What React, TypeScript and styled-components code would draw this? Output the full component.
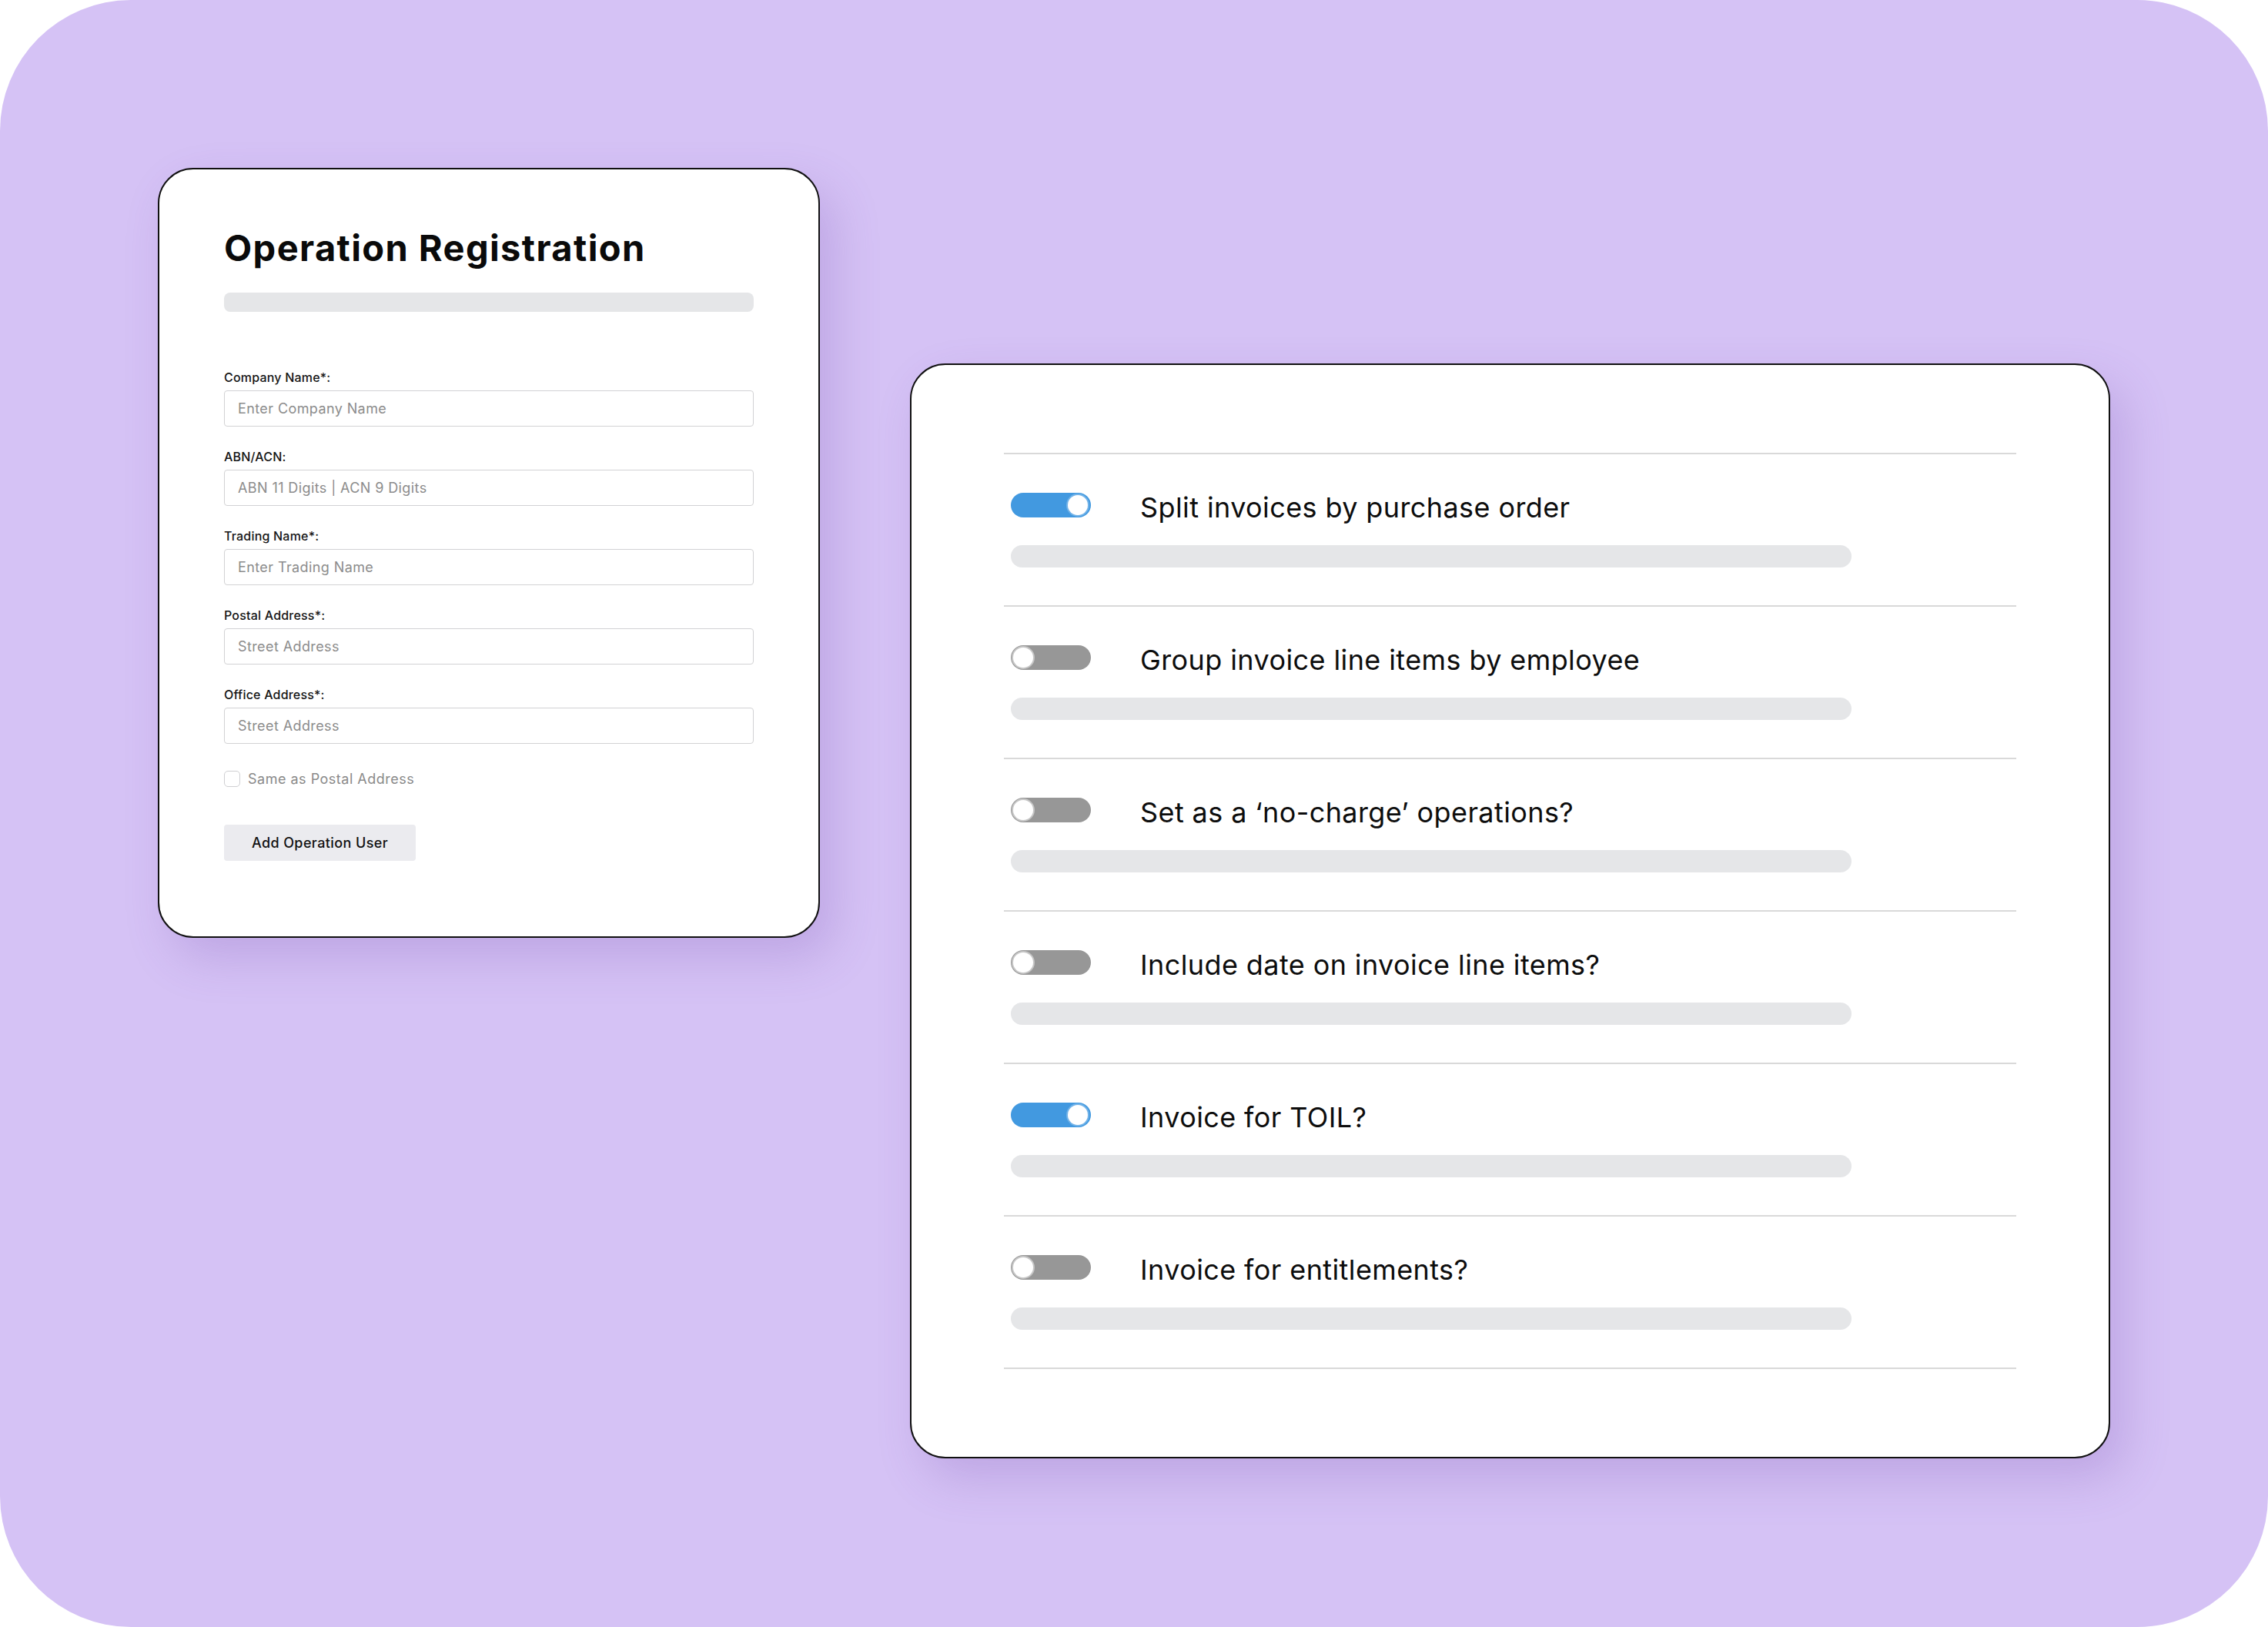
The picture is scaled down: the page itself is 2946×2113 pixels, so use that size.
import React from "react";
import styled, { createGlobalStyle } from "styled-components";

const Global = createGlobalStyle`
  html, body { margin: 0; padding: 0; background: #ffffff; }
  body { font-family: Inter, "Noto Sans", "Liberation Sans", sans-serif; -webkit-font-smoothing: antialiased; }
  * { box-sizing: border-box; }
`;

const Backdrop = styled.div`
  width: 2946px;
  height: 2113px;
  background: #d5c2f5;
  border-radius: 170px;
  display: flex;
  align-items: flex-start;
  gap: 117px;
  padding: 218px 0 0 205px;
  overflow: hidden;
`;

const Card = styled.div<{ $w: number; $h: number; $top?: number }>`
  width: ${(p) => p.$w}px;
  height: ${(p) => p.$h}px;
  margin-top: ${(p) => p.$top ?? 0}px;
  background: #ffffff;
  border: 2px solid #111111;
  border-radius: 46px;
  box-shadow: 18px 26px 60px rgba(110, 70, 170, 0.22);
  flex-shrink: 0;
`;

const FormCard = styled(Card)`
  padding: 74px 84px 0 84px;
  display: flex;
  flex-direction: column;
`;

const Title = styled.h1`
  margin: 0;
  font-family: Inter, "Liberation Sans", sans-serif;
  font-weight: 700;
  font-size: 47px;
  line-height: 55px;
  letter-spacing: 1.4px;
  color: #0a0a0a;
`;

const Placeholder = styled.div<{ $h: number; $r: number; $mt: number }>`
  height: ${(p) => p.$h}px;
  border-radius: ${(p) => p.$r}px;
  margin-top: ${(p) => p.$mt}px;
  background: #e5e6e8;
`;

const Fields = styled.div`
  margin-top: 75px;
  display: flex;
  flex-direction: column;
  gap: 29px;
`;

const Field = styled.div`
  display: flex;
  flex-direction: column;
  gap: 7px;
`;

const Label = styled.label`
  font-size: 16px;
  line-height: 20px;
  font-weight: 500;
  letter-spacing: 0.2px;
  color: #151515;
`;

const Input = styled.input`
  height: 47px;
  width: 100%;
  border: 1.5px solid #d2d2d4;
  border-radius: 4px;
  padding: 0 17px;
  font-family: Inter, "Liberation Sans", sans-serif;
  font-size: 18px;
  letter-spacing: 0.4px;
  color: #222;
  background: #fff;
  outline: none;
  &::placeholder { color: #8c8c8c; }
`;

const CheckRow = styled.label`
  margin-top: 35px;
  display: flex;
  align-items: center;
  gap: 10px;
  font-size: 18px;
  letter-spacing: 0.5px;
  color: #8a8a8a;
`;

const Box = styled.span`
  width: 21px;
  height: 21px;
  border: 1.5px solid #cfcfd2;
  border-radius: 5px;
  background: #fff;
`;

const Button = styled.button`
  margin-top: 49px;
  align-self: flex-start;
  width: 249px;
  height: 47px;
  border: none;
  border-radius: 4px;
  background: #ebebef;
  font-family: Inter, "Liberation Sans", sans-serif;
  font-size: 18px;
  font-weight: 500;
  letter-spacing: 0.4px;
  color: #111;
`;

const SettingsCard = styled(Card)`
  padding: 114px 120px 0 120px;
`;

const List = styled.div`
  border-bottom: 2px solid #d9d9d9;
`;

const Row = styled.div`
  height: 198px;
  border-top: 2px solid #d9d9d9;
  padding: 50px 214px 0 9px;
`;

const Head = styled.div`
  display: flex;
  align-items: center;
  gap: 64px;
  height: 32px;
`;

const Track = styled.span<{ $on: boolean }>`
  position: relative;
  width: 104px;
  height: 32px;
  border-radius: 16px;
  flex-shrink: 0;
  background: ${(p) => (p.$on ? "#4299e0" : "#979797")};
`;

const Knob = styled.span<{ $on: boolean }>`
  position: absolute;
  top: 3px;
  ${(p) => (p.$on ? "right: 4px;" : "left: 3px;")}
  width: 26px;
  height: 26px;
  border-radius: 50%;
  background: #fff;
  box-shadow: 0 0 0 2px ${(p) => (p.$on ? "rgba(255,255,255,0.25)" : "rgba(255,255,255,0.45)")};
`;

const RowLabel = styled.span`
  font-size: 36px;
  line-height: 44px;
  letter-spacing: 0.4px;
  color: #0d0d0d;
  margin-top: 6px;
`;

const fields = [
  { label: "Company Name*:", ph: "Enter Company Name" },
  { label: "ABN/ACN:", ph: "ABN 11 Digits | ACN 9 Digits" },
  { label: "Trading Name*:", ph: "Enter Trading Name" },
  { label: "Postal Address*:", ph: "Street Address" },
  { label: "Office Address*:", ph: "Street Address" },
];

const settings = [
  { text: "Split invoices by purchase order", on: true },
  { text: "Group invoice line items by employee", on: false },
  { text: "Set as a \u2018no-charge\u2019 operations?", on: false },
  { text: "Include date on invoice line items?", on: false },
  { text: "Invoice for TOIL?", on: true },
  { text: "Invoice for entitlements?", on: false },
];

export default function App() {
  return (
    <>
      <Global />
      <Backdrop>
        <FormCard $w={860} $h={1000}>
          <Title>Operation Registration</Title>
          <Placeholder $h={25} $r={8} $mt={31} />
          <Fields>
            {fields.map((f, i) => (
              <Field key={i}>
                <Label>{f.label}</Label>
                <Input placeholder={f.ph} readOnly />
              </Field>
            ))}
          </Fields>
          <CheckRow>
            <Box />
            Same as Postal Address
          </CheckRow>
          <Button>Add Operation User</Button>
        </FormCard>
        <SettingsCard $w={1559} $h={1422} $top={254}>
          <List>
            {settings.map((s, i) => (
              <Row key={i}>
                <Head>
                  <Track $on={s.on}>
                    <Knob $on={s.on} />
                  </Track>
                  <RowLabel>{s.text}</RowLabel>
                </Head>
                <Placeholder $h={29} $r={15} $mt={36} />
              </Row>
            ))}
          </List>
        </SettingsCard>
      </Backdrop>
    </>
  );
}
